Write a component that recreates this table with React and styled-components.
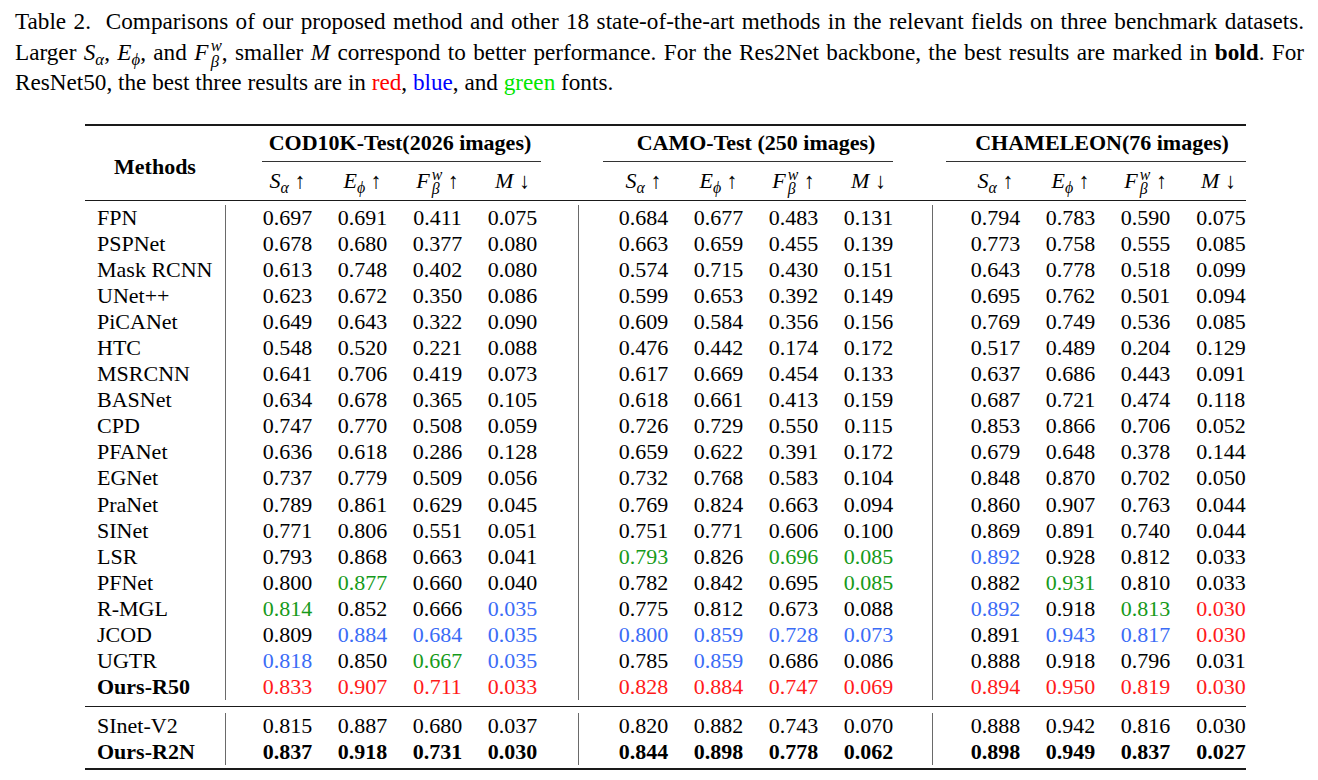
import styled, { createGlobalStyle } from 'styled-components';

const GlobalStyle = createGlobalStyle`
  html, body {
    margin: 0;
    padding: 0;
    background: #fff;
  }
  body {
    font-family: 'Liberation Serif', 'Times New Roman', 'DejaVu Serif', serif;
    color: #000;
  }
`;

const COLORS = { r: '#ff1a1a', b: '#3b6cf6', g: '#169a1a', k: '#000' };
const RULE = '#1a1a1a';
const VLINE = '#6a6a6a';

const Page = styled.div`
  width: 1318px;
  height: 780px;
  box-sizing: border-box;
  padding: 6px 14px 0 15px;
  overflow: hidden;
`;

const Caption = styled.div`
  font-size: 23.2px;
  line-height: 30.5px;
`;

const CaptionLine = styled.div`
  text-align: justify;
  text-align-last: ${p => (p.$last ? 'left' : 'justify')};
`;

const Tint = styled.span`
  color: ${p => p.$color};
`;

const Var = styled.i`
  font-style: italic;
`;

const Sub = styled.sub`
  font-size: 0.72em;
  line-height: 0;
  vertical-align: -0.3em;
  font-style: italic;
`;

// w over beta, as in F^w_beta
const Stack = styled.span`
  display: inline-flex;
  flex-direction: column;
  font-size: 0.72em;
  line-height: 0.92;
  font-style: italic;
  vertical-align: 0.5em;
  margin: -0.3em 0 -0.5em 0.14em;
  text-align: left;
`;

const Table = styled.table`
  border-collapse: collapse;
  table-layout: fixed;
  width: 1161px;
  margin: 26px 0 0 70px;
  font-size: 22px;
  line-height: 26px;
`;

const Col = styled.col`
  width: ${p => p.$w}px;
`;

const HeadRow = styled.tr`
  border-top: ${p => (p.$top ? `2px solid ${RULE}` : 'none')};
  border-bottom: ${p => (p.$bottom ? `1px solid ${RULE}` : 'none')};
  height: ${p => p.$h}px;
`;

const Th = styled.th`
  padding: 0;
  font-weight: normal;
  text-align: center;
  vertical-align: middle;
  white-space: nowrap;
`;

const MethodsTh = styled(Th)`
  font-weight: bold;
  padding-top: 8px;
`;

const GroupTh = styled(Th)`
  vertical-align: bottom;
`;

// the rule under a group title is trimmed like a \cmidrule; the padding keeps the
// title itself centred over its four columns
const GroupTitle = styled.div`
  font-weight: bold;
  padding: 4px ${p => Math.max(0, p.$ml - p.$mr)}px 5px ${p => Math.max(0, p.$mr - p.$ml)}px;
  border-bottom: 1px solid #333;
  margin: 0 ${p => p.$mr}px 0 ${p => p.$ml}px;
`;

const SpacerRow = styled.tr`
  height: ${p => p.$h}px;
  border-bottom: ${p => (p.$rule ? `${p.$rule}px solid ${RULE}` : 'none')};

  td {
    padding: 0;
  }
`;

const Row = styled.tr`
  height: 26.1px;
`;

const MethodCell = styled.td`
  padding: 0 0 0 12px;
  text-align: left;
  white-space: nowrap;
  font-weight: ${p => (p.$bold ? 'bold' : 'normal')};
  border-right: 1px solid ${VLINE};
`;

const Gap = styled.td`
  padding: 0;
  border-right: ${p => (p.$line ? `1px solid ${VLINE}` : 'none')};
`;

const Num = styled.td`
  padding: 0 0 0 ${p => (p.$last ? 13 : 0)}px;
  text-align: center;
  white-space: nowrap;
  color: ${p => COLORS[p.$c]};
  font-weight: ${p => (p.$bold ? 'bold' : 'normal')};
`;

const SubHead = styled(Th)`
  padding-left: ${p => (p.$last ? 8 : 0)}px;
`;

const Arrow = styled.span`
  margin-left: 0.25em;
  font-style: normal;
`;

const WIDTHS = [140, 25, 75, 75, 75, 75, 28, 28, 75, 75, 75, 75, 26, 26, 75, 75, 75, 63];

const ROWS = [
  ['FPN', '0.697 0.691 0.411 0.075', '0.684 0.677 0.483 0.131', '0.794 0.783 0.590 0.075'],
  ['PSPNet', '0.678 0.680 0.377 0.080', '0.663 0.659 0.455 0.139', '0.773 0.758 0.555 0.085'],
  ['Mask RCNN', '0.613 0.748 0.402 0.080', '0.574 0.715 0.430 0.151', '0.643 0.778 0.518 0.099'],
  ['UNet++', '0.623 0.672 0.350 0.086', '0.599 0.653 0.392 0.149', '0.695 0.762 0.501 0.094'],
  ['PiCANet', '0.649 0.643 0.322 0.090', '0.609 0.584 0.356 0.156', '0.769 0.749 0.536 0.085'],
  ['HTC', '0.548 0.520 0.221 0.088', '0.476 0.442 0.174 0.172', '0.517 0.489 0.204 0.129'],
  ['MSRCNN', '0.641 0.706 0.419 0.073', '0.617 0.669 0.454 0.133', '0.637 0.686 0.443 0.091'],
  ['BASNet', '0.634 0.678 0.365 0.105', '0.618 0.661 0.413 0.159', '0.687 0.721 0.474 0.118'],
  ['CPD', '0.747 0.770 0.508 0.059', '0.726 0.729 0.550 0.115', '0.853 0.866 0.706 0.052'],
  ['PFANet', '0.636 0.618 0.286 0.128', '0.659 0.622 0.391 0.172', '0.679 0.648 0.378 0.144'],
  ['EGNet', '0.737 0.779 0.509 0.056', '0.732 0.768 0.583 0.104', '0.848 0.870 0.702 0.050'],
  ['PraNet', '0.789 0.861 0.629 0.045', '0.769 0.824 0.663 0.094', '0.860 0.907 0.763 0.044'],
  ['SINet', '0.771 0.806 0.551 0.051', '0.751 0.771 0.606 0.100', '0.869 0.891 0.740 0.044'],
  ['LSR', '0.793 0.868 0.663 0.041', '0.793g 0.826 0.696g 0.085g', '0.892b 0.928 0.812 0.033'],
  ['PFNet', '0.800 0.877g 0.660 0.040', '0.782 0.842 0.695 0.085g', '0.882 0.931g 0.810 0.033'],
  ['R-MGL', '0.814g 0.852 0.666 0.035b', '0.775 0.812 0.673 0.088', '0.892b 0.918 0.813g 0.030r'],
  ['JCOD', '0.809 0.884b 0.684b 0.035b', '0.800b 0.859b 0.728b 0.073b', '0.891 0.943b 0.817b 0.030r'],
  ['UGTR', '0.818b 0.850 0.667g 0.035b', '0.785 0.859b 0.686 0.086', '0.888 0.918 0.796 0.031'],
  ['Ours-R50', '0.833r 0.907r 0.711r 0.033r', '0.828r 0.884r 0.747r 0.069r', '0.894r 0.950r 0.819r 0.030r', true],
];

const R2N_ROWS = [
  ['SInet-V2', '0.815 0.887 0.680 0.037', '0.820 0.882 0.743 0.070', '0.888 0.942 0.816 0.030'],
  ['Ours-R2N', '0.837 0.918 0.731 0.030', '0.844 0.898 0.778 0.062', '0.898 0.949 0.837 0.027', true, true],
];

// "0.793g" -> { value: '0.793', color: 'g' }
const parse = group =>
  group.split(' ').map(token => {
    const last = token[token.length - 1];
    return /[rgb]/.test(last) ? { value: token.slice(0, -1), color: last } : { value: token, color: 'k' };
  });

const Metric = ({ name }) => {
  if (name === 'S') return <><Var>S</Var><Sub>α</Sub><Arrow>↑</Arrow></>;
  if (name === 'E') return <><Var>E</Var><Sub>ϕ</Sub><Arrow>↑</Arrow></>;
  if (name === 'F')
    return (
      <>
        <Var>F</Var>
        <Stack><span>w</span><span>β</span></Stack>
        <Arrow>↑</Arrow>
      </>
    );
  return <><Var>M</Var><Arrow>↓</Arrow></>;
};

const METRICS = ['S', 'E', 'F', 'M'];

const DataRow = ({ row }) => {
  const [name, cod, camo, cham, boldName, boldNums] = row;
  const cells = (group, last) =>
    parse(group).map((v, i) => (
      <Num key={i} $c={v.color} $bold={boldNums} $last={last && i === 3}>
        {v.value}
      </Num>
    ));
  return (
    <Row>
      <MethodCell $bold={boldName}>{name}</MethodCell>
      <Gap />
      {cells(cod)}
      <Gap $line />
      <Gap />
      {cells(camo)}
      <Gap $line />
      <Gap />
      {cells(cham, true)}
    </Row>
  );
};

const App = () => (
  <Page>
    <GlobalStyle />
    <Caption>
      <CaptionLine>
        Table 2.&nbsp; Comparisons of our proposed method and other 18 state-of-the-art methods in the relevant fields on three benchmark datasets.
      </CaptionLine>
      <CaptionLine>
        Larger <Var>S</Var><Sub>α</Sub>, <Var>E</Var><Sub>ϕ</Sub>, and <Var>F</Var>
        <Stack><span>w</span><span>β</span></Stack>, smaller <Var>M</Var> correspond to better performance. For the Res2Net backbone, the best results are marked in <b>bold</b>. For
      </CaptionLine>
      <CaptionLine $last>
        ResNet50, the best three results are in <Tint $color="#ff0000">red</Tint>, <Tint $color="#0000ff">blue</Tint>, and <Tint $color="#00e600">green</Tint> fonts.
      </CaptionLine>
    </Caption>

    <Table>
      <colgroup>
        {WIDTHS.map((w, i) => <Col key={i} $w={w} />)}
      </colgroup>
      <thead>
        <HeadRow $top $h={36}>
          <MethodsTh rowSpan={2}>Methods</MethodsTh>
          <Th />
          <GroupTh colSpan={4}><GroupTitle $ml={12} $mr={9}>COD10K-Test(2026 images)</GroupTitle></GroupTh>
          <Th />
          <Th />
          <GroupTh colSpan={4}><GroupTitle $ml={-3} $mr={13}>CAMO-Test (250 images)</GroupTitle></GroupTh>
          <Th />
          <Th />
          <GroupTh colSpan={4}><GroupTitle $ml={-12} $mr={0}>CHAMELEON(76 images)</GroupTitle></GroupTh>
        </HeadRow>
        <HeadRow $bottom $h={39}>
          <Th />
          {METRICS.map(m => <SubHead key={m}><Metric name={m} /></SubHead>)}
          <Th />
          <Th />
          {METRICS.map(m => <SubHead key={m}><Metric name={m} /></SubHead>)}
          <Th />
          <Th />
          {METRICS.map((m, i) => <SubHead key={m} $last={i === 3}><Metric name={m} /></SubHead>)}
        </HeadRow>
      </thead>
      <tbody>
        <SpacerRow $h={4}><td colSpan={18} /></SpacerRow>
        {ROWS.map(r => <DataRow key={r[0]} row={r} />)}
        <SpacerRow $h={6} $rule={1}><td colSpan={18} /></SpacerRow>
      </tbody>
      <tbody>
        <SpacerRow $h={7}><td colSpan={18} /></SpacerRow>
        {R2N_ROWS.map(r => <DataRow key={r[0]} row={r} />)}
        <SpacerRow $h={4} $rule={2}><td colSpan={18} /></SpacerRow>
      </tbody>
    </Table>
  </Page>
);

export default App;
